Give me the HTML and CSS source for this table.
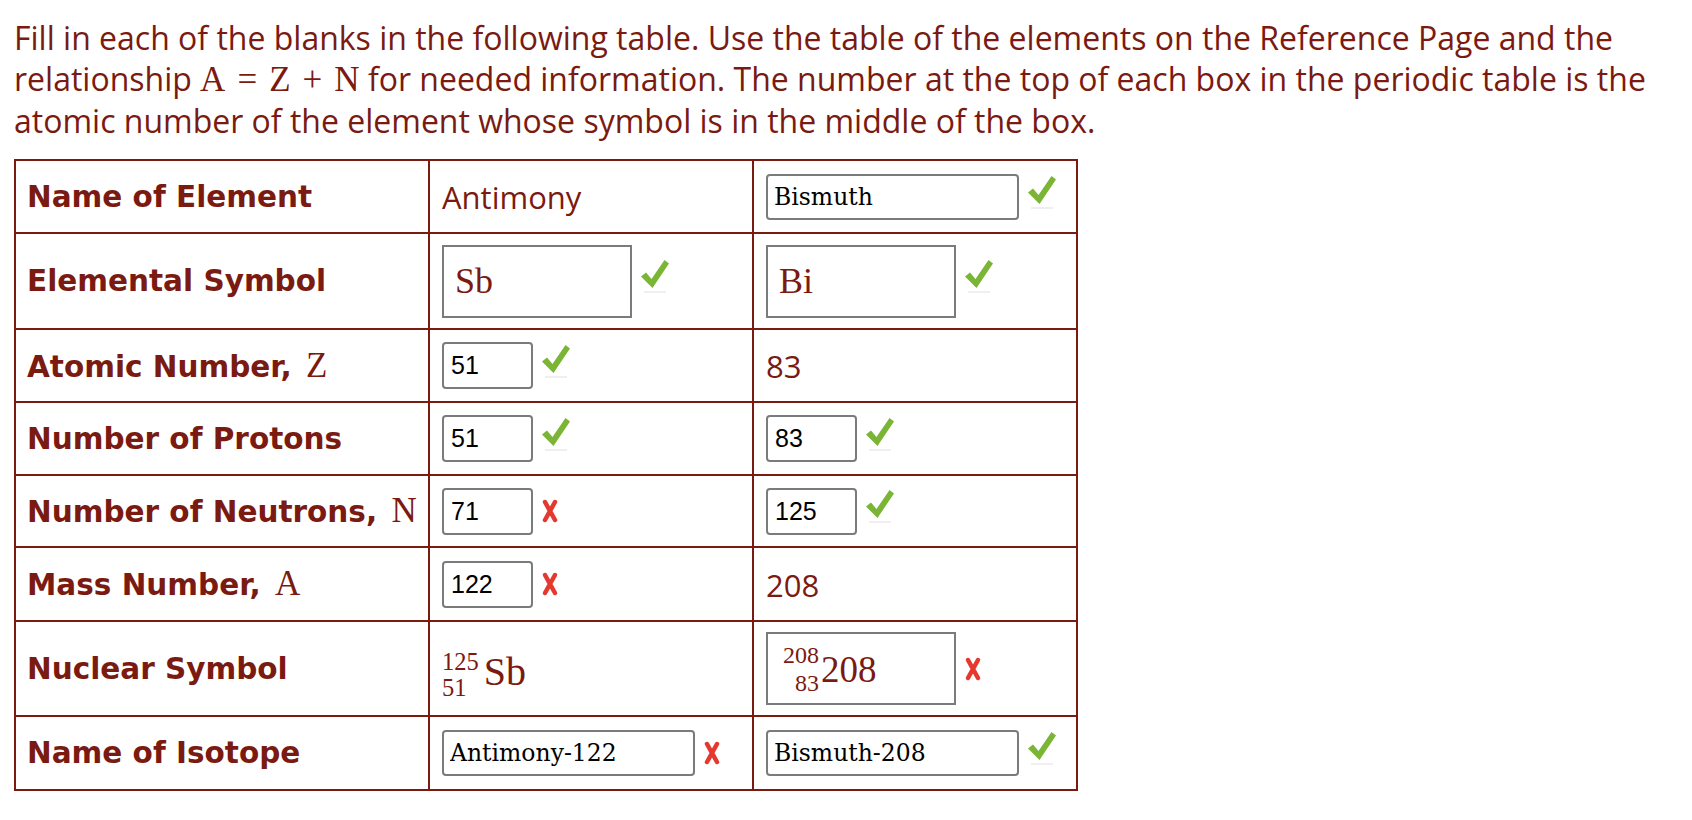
FILE: index.html
```html
<!DOCTYPE html>
<html>
<head>
<meta charset="utf-8">
<link rel="stylesheet" href="styles.css">
</head>
<body>
<p class="intro">Fill in each of the blanks in the following table. Use the table of the elements on the Reference Page and the relationship <span class="math">A</span><span class="math op">=</span><span class="math">Z</span><span class="math op">+</span><span class="math">N</span> for needed information. The number at the top of each box in the periodic table is the atomic number of the element whose symbol is in the middle of the box.</p>

<table class="grid">
  <colgroup><col class="c1"><col class="c2"><col class="c3"></colgroup>
  <tr class="r1">
    <th>Name of Element</th>
    <td><span class="plain">Antimony</span></td>
    <td><div class="field"><input class="txt wide" readonly value="Bismuth"><span class="ok"><svg viewBox="0 0 30 30"><path d="M1 17.5 L6 13.5 L11.5 20 L24.5 1 L29 4.5 L12.5 29 Z"/></svg></span></div></td>
  </tr>
  <tr class="r2">
    <th>Elemental Symbol</th>
    <td><div class="field"><div class="symbox"><span class="sym">Sb</span></div><span class="ok"><svg viewBox="0 0 30 30"><path d="M1 17.5 L6 13.5 L11.5 20 L24.5 1 L29 4.5 L12.5 29 Z"/></svg></span></div></td>
    <td><div class="field"><div class="symbox"><span class="sym">Bi</span></div><span class="ok"><svg viewBox="0 0 30 30"><path d="M1 17.5 L6 13.5 L11.5 20 L24.5 1 L29 4.5 L12.5 29 Z"/></svg></span></div></td>
  </tr>
  <tr class="r3">
    <th>Atomic Number, <span class="math">Z</span></th>
    <td><div class="field"><input class="num" readonly value="51"><span class="ok"><svg viewBox="0 0 30 30"><path d="M1 17.5 L6 13.5 L11.5 20 L24.5 1 L29 4.5 L12.5 29 Z"/></svg></span></div></td>
    <td><span class="plain">83</span></td>
  </tr>
  <tr class="r4">
    <th>Number of Protons</th>
    <td><div class="field"><input class="num" readonly value="51"><span class="ok"><svg viewBox="0 0 30 30"><path d="M1 17.5 L6 13.5 L11.5 20 L24.5 1 L29 4.5 L12.5 29 Z"/></svg></span></div></td>
    <td><div class="field"><input class="num" readonly value="83"><span class="ok"><svg viewBox="0 0 30 30"><path d="M1 17.5 L6 13.5 L11.5 20 L24.5 1 L29 4.5 L12.5 29 Z"/></svg></span></div></td>
  </tr>
  <tr class="r5">
    <th>Number of Neutrons, <span class="math">N</span></th>
    <td><div class="field"><input class="num" readonly value="71"><span class="bad"><svg viewBox="0 0 18 26"><path d="M4 4 L14 22 M14 4 L4 22"/></svg></span></div></td>
    <td><div class="field"><input class="num" readonly value="125"><span class="ok"><svg viewBox="0 0 30 30"><path d="M1 17.5 L6 13.5 L11.5 20 L24.5 1 L29 4.5 L12.5 29 Z"/></svg></span></div></td>
  </tr>
  <tr class="r6">
    <th>Mass Number, <span class="math">A</span></th>
    <td><div class="field"><input class="num" readonly value="122"><span class="bad"><svg viewBox="0 0 18 26"><path d="M4 4 L14 22 M14 4 L4 22"/></svg></span></div></td>
    <td><span class="plain">208</span></td>
  </tr>
  <tr class="r7">
    <th>Nuclear Symbol</th>
    <td><span class="nuc"><span class="scripts"><span>125</span><span>51</span></span><span class="nsym">Sb</span></span></td>
    <td><div class="field"><div class="symbox"><span class="nuc bi"><span class="scripts right"><span>208</span><span>83</span></span><span class="nsym">208</span></span></div><span class="bad"><svg viewBox="0 0 18 26"><path d="M4 4 L14 22 M14 4 L4 22"/></svg></span></div></td>
  </tr>
  <tr class="r8">
    <th>Name of Isotope</th>
    <td><div class="field"><input class="txt wide" readonly value="Antimony-122"><span class="bad"><svg viewBox="0 0 18 26"><path d="M4 4 L14 22 M14 4 L4 22"/></svg></span></div></td>
    <td><div class="field"><input class="txt wide" readonly value="Bismuth-208"><span class="ok"><svg viewBox="0 0 30 30"><path d="M1 17.5 L6 13.5 L11.5 20 L24.5 1 L29 4.5 L12.5 29 Z"/></svg></span></div></td>
  </tr>
</table>
</body>
</html>
```

FILE: styles.css
```css
html, body {
  margin: 0;
  padding: 0;
  background: #ffffff;
}
body {
  padding: 17px 0 0 14px;
  color: #7a1a10;
  font-family: "Open Sans", "Noto Sans", sans-serif;
  font-size: 32px;
}
.intro {
  margin: 0 0 18px 0;
  line-height: 41px;
  width: 1672px;
}
.math {
  font-family: "Liberation Serif", "DejaVu Serif", serif;
  font-size: 35px;
}
.op {
  margin: 0 12px;
}
.grid {
  border-collapse: collapse;
  border: 2px solid #7a1a10;
  table-layout: fixed;
  width: 1062px;
}
.c1 { width: 414px; }
.c2 { width: 324px; }
.c3 { width: 324px; }
.grid th, .grid td {
  border: 2px solid #7a1a10;
  padding: 0 0 0 12px;
  text-align: left;
  vertical-align: middle;
}
.grid th {
  font-family: "DejaVu Sans", Verdana, sans-serif;
  font-weight: bold;
  font-size: 29.5px;
  color: #7a1a10;
  white-space: nowrap;
  padding-left: 11px;
}
.grid th .math {
  font-weight: normal;
  font-size: 35px;
  margin-left: 4px;
}
.r1 { height: 73px; }
.r2 { height: 96px; }
.r3 { height: 73px; }
.r4 { height: 73px; }
.r5 { height: 72px; }
.r6 { height: 74px; }
.r7 { height: 95px; }
.r8 { height: 74px; }
.plain {
  font-family: "Open Sans", sans-serif;
  font-size: 31px;
  color: #7a1a10;
}
.field {
  display: flex;
  align-items: center;
  gap: 8px;
}
input {
  margin: 0;
  box-sizing: border-box;
  border: 2px solid #7b7b7b;
  border-radius: 4px;
  background: #fff;
  color: #000;
  outline: none;
}
.num {
  width: 91px;
  height: 47px;
  padding: 0 7px;
  font-family: "Liberation Sans", Arial, sans-serif;
  font-size: 25px;
}
.txt {
  height: 46px;
  padding: 0 6px;
  font-family: "DejaVu Serif", serif;
  font-size: 23.5px;
}
.wide { width: 253px; }
.symbox {
  box-sizing: border-box;
  width: 190px;
  height: 73px;
  border: 2px solid #7b7b7b;
  display: flex;
  align-items: center;
  padding-left: 11px;
}
.sym {
  font-family: "Liberation Serif", serif;
  font-size: 36px;
  color: #7a1a10;
}
.ok, .bad {
  display: flex;
  flex-direction: column;
  align-items: center;
}
.ok {
  margin-top: -10px;
}
.ok svg {
  width: 30px;
  height: 30px;
  fill: #7ab536;
}
.ok::after {
  content: "";
  display: block;
  width: 22px;
  height: 2px;
  background: #efefef;
  margin-top: 2px;
}
.bad svg {
  width: 18px;
  height: 26px;
  fill: none;
  stroke: #e5392f;
  stroke-width: 4.5;
  stroke-linecap: round;
}
.nuc {
  display: inline-flex;
  align-items: center;
  color: #7a1a10;
  font-family: "Liberation Serif", serif;
  margin-top: -4px;
}
.scripts {
  display: flex;
  flex-direction: column;
  font-size: 24.5px;
  line-height: 26px;
  margin-right: 5px;
}
.scripts.right {
  align-items: flex-end;
  font-size: 24px;
  line-height: 28px;
  margin-left: 4px;
  margin-right: 2px;
}
.nsym {
  font-size: 40px;
  margin-top: -8px;
}
.bi {
  margin-top: 0;
}
.bi .nsym {
  font-size: 37px;
  margin-top: 2px;
}
```
